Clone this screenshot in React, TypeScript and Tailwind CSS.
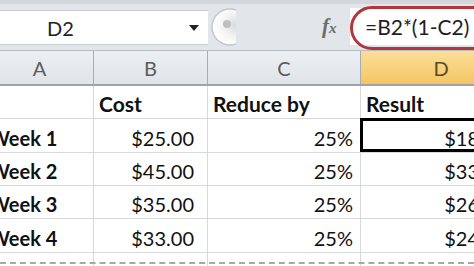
import React from "react";

const font = { fontFamily: "Lato, 'Open Sans', sans-serif" };

type Row = { h: number; cells: [string, string, string, string]; bold?: boolean };

const rows: Row[] = [
  { h: 33, cells: ["", "Cost", "Reduce by", "Result"], bold: true },
  { h: 34, cells: ["Week 1", "$25.00", "25%", "$18.75"] },
  { h: 33, cells: ["Week 2", "$45.00", "25%", "$33.75"] },
  { h: 33, cells: ["Week 3", "$35.00", "25%", "$26.25"] },
  { h: 34, cells: ["Week 4", "$33.00", "25%", "$24.75"] },
];

const widths = [108, 114, 153, 160];

export default function App() {
  return (
    <div className="relative w-[474px] h-[266px] overflow-hidden bg-white" style={font}>
      {/* formula bar */}
      <div className="h-[50px] bg-[#e2e5e9] border-t-[4px] border-t-[#d3d7dc] flex items-start">
        <div className="mt-[6px] h-[35px] w-[208px] bg-white border-y border-[#c9cdd2] flex items-center relative">
          <span className="ml-[47px] text-[20px] leading-none text-[#222]">D2</span>
          <svg className="absolute left-[188px] top-[13px]" width="12" height="8" viewBox="0 0 12 8">
            <path d="M1 1 L11 1 L6 7 Z" fill="#222" />
          </svg>
        </div>
        <div className="w-[28px] h-[44px] mt-[1px] flex items-center">
          <svg width="28" height="40" viewBox="0 0 28 40">
            <defs>
              <radialGradient id="kg" cx="0.65" cy="0.45" r="0.6">
                <stop offset="0" stopColor="#d9d9d9" />
                <stop offset="0.5" stopColor="#f2f2f2" />
                <stop offset="1" stopColor="#ffffff" />
              </radialGradient>
            </defs>
            <circle cx="22" cy="20" r="18" fill="url(#kg)" stroke="#c4c7cb" strokeWidth="1.5" />
            <circle cx="19" cy="17" r="4" fill="#bfbfbf" />
          </svg>
        </div>
        <div className="flex-1 h-[44px] flex items-center">
          <span
            className="ml-[86px] text-[21px] italic font-bold text-[#6b6b6b] leading-none"
            style={{ fontFamily: "'Liberation Serif', serif" }}
          >
            f<span className="text-[15px]">x</span>
          </span>
        </div>
      </div>
      {/* formula input */}
      <div className="absolute left-[350px] top-[8px] w-[140px] h-[37px] bg-white flex items-center">
        <span className="ml-[15px] text-[21px] leading-none text-[#1e1e1e] whitespace-nowrap">=B2*(1-C2)</span>
      </div>
      <div className="absolute left-[350px] top-[6px] w-[200px] h-[44px] rounded-[22px] border-[3px] border-[#b2373c]" />

      {/* grid */}
      <div className="ml-[-14px]">
        {/* column headers */}
        <div className="flex h-[36px] border-t border-t-[#b7bcc3] border-b-2 border-b-[#9ea3a9]">
          {["A", "B", "C", "D"].map((l, i) => (
            <div
              key={l}
              className={
                i === 3
                  ? "shrink-0 flex items-center justify-center bg-gradient-to-b from-[#fbdf97] to-[#f4c564] text-[#5a4a2a] text-[20px]"
                  : "shrink-0 flex items-center justify-center bg-gradient-to-b from-[#eceff3] to-[#e0e4e9] border-r border-r-[#a9adb3] text-[#5c5c5c] text-[20px]"
              }
              style={{ width: widths[i] }}
            >
              {l}
            </div>
          ))}
        </div>
        {rows.map((r, ri) => (
          <div key={ri} className="flex" style={{ height: r.h }}>
            {r.cells.map((c, ci) => {
              const right = !r.bold && ci > 0;
              const sel = ri === 1 && ci === 3;
              return (
                <div
                  key={ci}
                  className={
                    "shrink-0 relative flex items-end border-r border-b border-[#d8d9db] pb-[4px] leading-none whitespace-nowrap text-[#111] " +
                    (r.bold ? "font-bold text-[21px] pl-[5px] " : "text-[20px] ") +
                    (ci === 0 && !r.bold ? "font-bold pl-[3px] " : "") +
                    (right ? "justify-end " : "") +
                    (right && ci === 2 ? "pr-[7px] " : "") +
                    (right && ci !== 2 ? "pr-[13px] " : "")
                  }
                  style={{ width: widths[ci] }}
                >
                  {sel && <div className="absolute left-[-1px] top-[-1px] right-0 bottom-0 border-[3px] border-black" />}
                  <span className="relative">{c}</span>
                </div>
              );
            })}
          </div>
        ))}
        <div className="flex h-[13px]">
          {widths.map((w, i) => (
            <div key={i} className="shrink-0 border-r border-[#d8d9db]" style={{ width: w }} />
          ))}
        </div>
      </div>
      <div className="absolute left-0 top-[262px] w-[474px] border-t-2 border-dashed border-[#a8a8a8]" />
    </div>
  );
}
